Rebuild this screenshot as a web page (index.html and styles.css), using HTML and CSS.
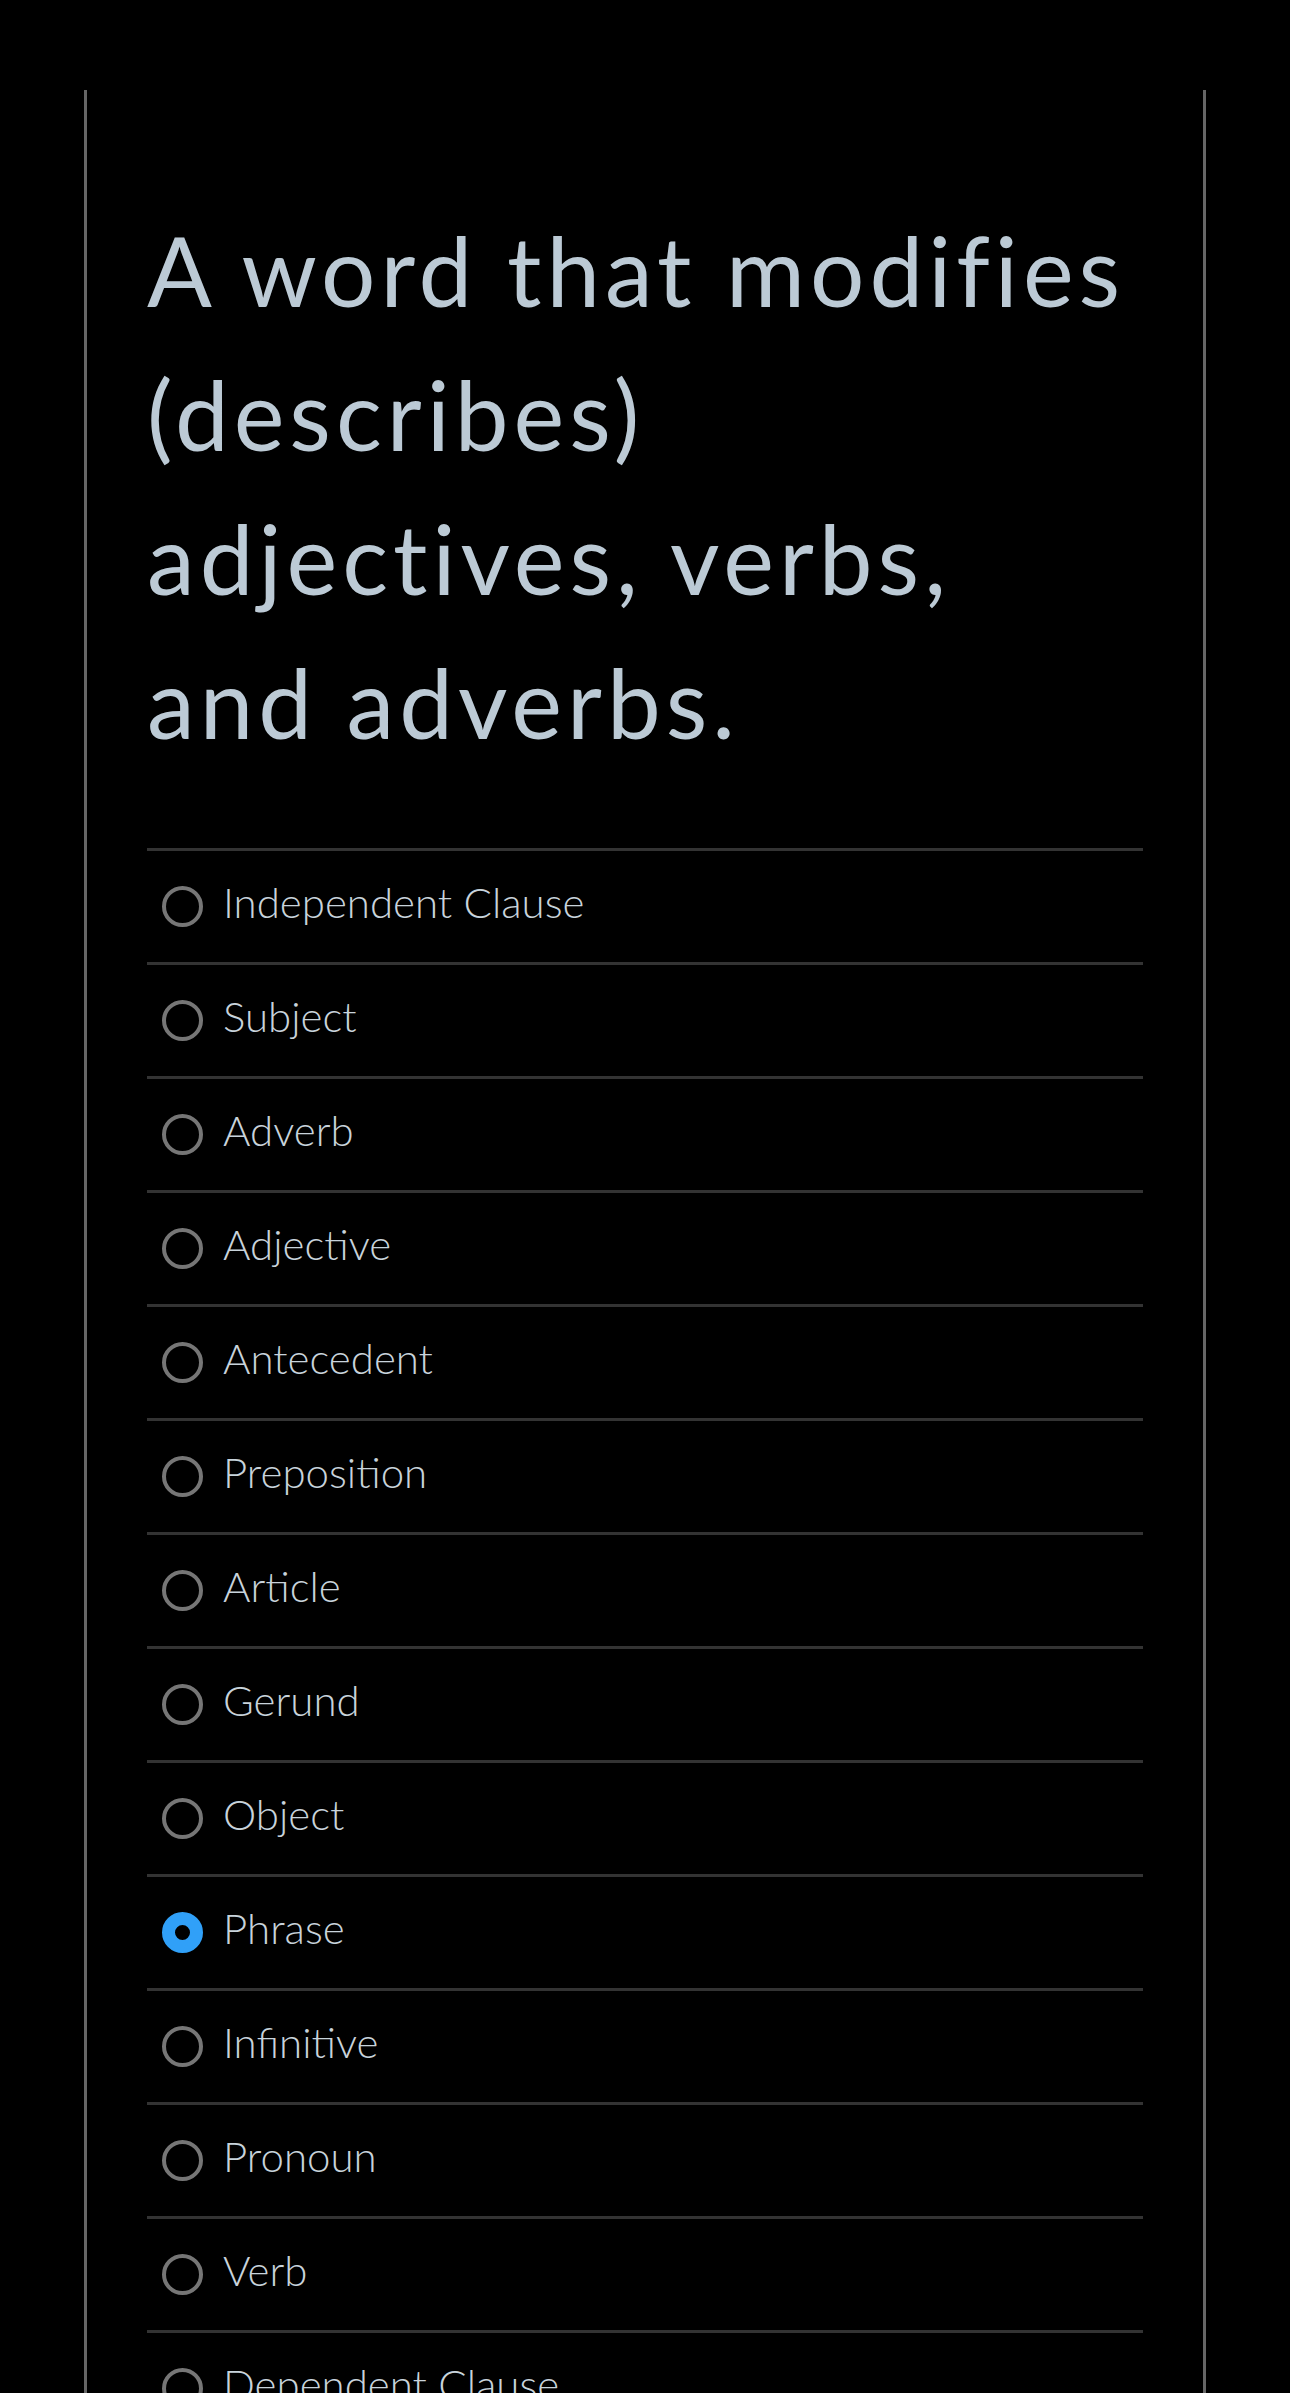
FILE: index.html
```html
<!DOCTYPE html>
<html lang="en">

<head>
  <meta charset="UTF-8">
  <meta name="viewport" content="width=device-width, initial-scale=1.0">
  <title>Quiz</title>
  <link rel="stylesheet" href="styles.css">
</head>

<body>
  <div class="quiz">
    <h1 class="question">A word that modifies (describes) adjectives, verbs, and adverbs.</h1>

    <form class="answers">
      <label class="answer"><input type="radio" name="answer"> <span>Independent Clause</span></label>
      <label class="answer"><input type="radio" name="answer"> <span>Subject</span></label>
      <label class="answer"><input type="radio" name="answer"> <span>Adverb</span></label>
      <label class="answer"><input type="radio" name="answer"> <span>Adjective</span></label>
      <label class="answer"><input type="radio" name="answer"> <span>Antecedent</span></label>
      <label class="answer"><input type="radio" name="answer"> <span>Preposition</span></label>
      <label class="answer"><input type="radio" name="answer"> <span>Article</span></label>
      <label class="answer"><input type="radio" name="answer"> <span>Gerund</span></label>
      <label class="answer"><input type="radio" name="answer"> <span>Object</span></label>
      <label class="answer"><input type="radio" name="answer" checked> <span>Phrase</span></label>
      <label class="answer"><input type="radio" name="answer"> <span>Infinitive</span></label>
      <label class="answer"><input type="radio" name="answer"> <span>Pronoun</span></label>
      <label class="answer"><input type="radio" name="answer"> <span>Verb</span></label>
      <label class="answer"><input type="radio" name="answer"> <span>Dependent Clause</span></label>
    </form>
  </div>
</body>

</html>
```

FILE: styles.css
```css
body {
  margin: 0;
  padding: 0;
  background-color: #000;
  font-family: Lato, "Open Sans", sans-serif;
}

.quiz {
  margin: 90px 84px 0;
  padding: 108px 60px 0;
  border-left: 3px solid #666;
  border-right: 3px solid #666;
}

.question {
  margin: 0 0 74px;
  font-size: 96px;
  font-weight: 400;
  line-height: 144px;
  letter-spacing: 5px;
  color: #bccad5;
}

.answers {
  display: flex;
  flex-direction: column;
}

.answer {
  display: flex;
  align-items: center;
  height: 111px;
  border-top: 3px solid #333;
  font-size: 42px;
  font-weight: 300;
  color: #c8d3db;
  cursor: pointer;
}

.answer span {
  margin-bottom: 10px;
}

/* custom radio, drawn at 3x */
.answer input {
  appearance: none;
  -webkit-appearance: none;
  box-sizing: border-box;
  width: 41px;
  height: 41px;
  margin: 0 20px 0 15px;
  border: 4px solid #767676;
  border-radius: 50%;
  background-color: #000;
  flex-shrink: 0;
}

.answer input:checked {
  border: 13px solid #30a0f8;
}
```
